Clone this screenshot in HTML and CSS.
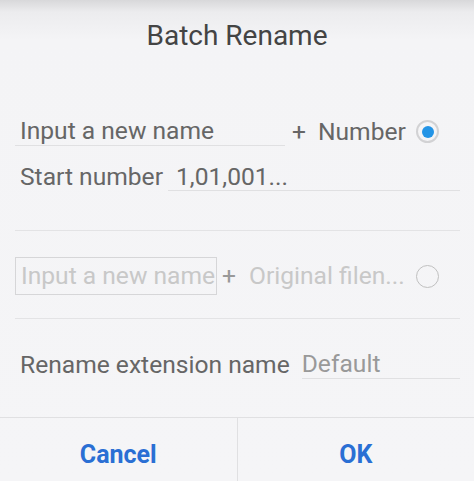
FILE: index.html
```html
<!DOCTYPE html>
<html lang="en">
<head>
    <meta charset="UTF-8">
    <title>Batch Rename</title>
    <link rel="stylesheet" href="styles.css">
</head>
<body>
    <div class="dialog">
        <h1 class="title">Batch Rename</h1>

        <div class="section first">
            <div class="row">
                <div class="field name-field">Input a new name</div>
                <span class="plus">+</span>
                <span class="option">Number</span>
                <span class="radio checked"></span>
            </div>
            <div class="row start-row">
                <span class="label">Start number</span>
                <div class="field grow start-field">1,01,001...</div>
            </div>
        </div>

        <div class="section disabled">
            <div class="row">
                <div class="field boxed">Input a new name</div>
                <span class="plus">+</span>
                <span class="option">Original filen...</span>
                <span class="radio"></span>
            </div>
        </div>

        <div class="section last">
            <div class="row">
                <span class="label ext-label">Rename extension name</span>
                <div class="field grow hint">Default</div>
            </div>
        </div>

        <div class="buttons">
            <button class="btn">Cancel</button>
            <button class="btn">OK</button>
        </div>
    </div>
</body>
</html>
```

FILE: styles.css
```css
body { margin: 0; background: #f5f5f7; font-family: Roboto, "Noto Sans", sans-serif; }
.dialog { width: 474px; height: 481px; display: flex; flex-direction: column; background: linear-gradient(#d8d8da 0px, #ececee 12px, #f4f4f6 40px, #f5f5f7 100%); }
.title { margin: 0; padding-top: 19px; line-height: 33px; text-align: center; font-size: 28px; font-weight: normal; color: #444; }

.section { margin: 0 14px 0 15px; border-bottom: 1px solid #e3e3e5; }
.section.first { padding: 65px 0 39px; }
.section.disabled { padding: 26px 0 23px; }
.section.last { padding-top: 31px; border-bottom: none; }

.row { display: flex; align-items: center; color: #666; font-size: 24.6px; line-height: 28px; }
.start-row { margin-top: 17px; }
.field { border-bottom: 1px solid #e0e0e2; padding-left: 5px; white-space: nowrap; }
.name-field { width: 265px; }
.start-field { line-height: 27px; padding-left: 8px; }
.grow { flex: 1; }
.label { padding-left: 5px; margin-right: 5px; }
.ext-label { margin-right: 12px; }
.plus { margin-left: 7px; margin-right: 12px; }
.option { flex: 1; }
.radio { width: 23px; height: 23px; border: 1.5px solid #c4c4c4; border-radius: 50%; margin-right: 21px; box-sizing: border-box; display: flex; align-items: center; justify-content: center; }
.radio.checked { border: 2px solid #d2d2d4; }
.radio.checked::after { content: ""; width: 12px; height: 12px; border-radius: 50%; background: #2394e6; }

.disabled .row { color: #c8c8c8; }
.disabled .plus { color: #999; margin-left: 5px; margin-right: 13px; }
.disabled .field.boxed { border: 1px solid #d6d6d8; padding: 4px 0 4px 5px; width: 195px; overflow: hidden; }
.disabled .radio { border-color: #c0c0c0; }
.hint { color: #999; padding-left: 0; }

.buttons { margin-top: auto; display: flex; height: 63px; border-top: 1px solid #e0e0e2; }
.btn { flex: 1; border: none; background: none; font-family: Roboto, sans-serif; font-size: 25px; line-height: 30px; font-weight: bold; color: #2a6fd4; padding: 22px 0 0; align-self: stretch; display: flex; justify-content: center; }
.btn + .btn { border-left: 1px solid #e0e0e2; }
```
